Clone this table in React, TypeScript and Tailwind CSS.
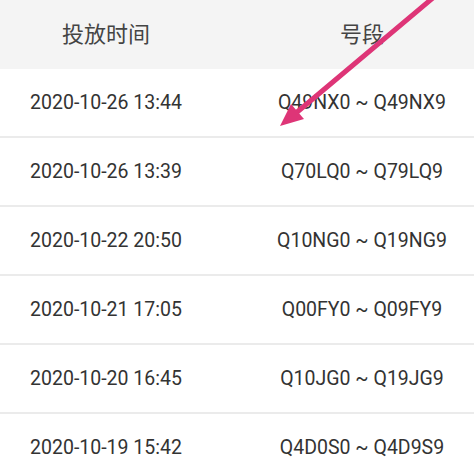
const rows = [
  { time: "2020-10-26 13:44", range: "Q49NX0 ~ Q49NX9" },
  { time: "2020-10-26 13:39", range: "Q70LQ0 ~ Q79LQ9" },
  { time: "2020-10-22 20:50", range: "Q10NG0 ~ Q19NG9" },
  { time: "2020-10-21 17:05", range: "Q00FY0 ~ Q09FY9" },
  { time: "2020-10-20 16:45", range: "Q10JG0 ~ Q19JG9" },
  { time: "2020-10-19 15:42", range: "Q4D0S0 ~ Q4D9S9" },
];

export default function App() {
  return (
    <div
      className="relative w-[474px] h-[467px] overflow-hidden bg-white text-[#333]"
      style={{ fontFamily: 'Roboto, "Noto Sans CJK SC", sans-serif' }}
    >
      {/* header */}
      <div className="flex h-[69px] items-center bg-[#f4f4f4] text-[22px] text-[#444]">
        <div className="w-[212px] text-center">投放时间</div>
        <div className="flex-1 pl-[38px] text-center">号段</div>
      </div>

      {rows.map((row) => (
        <div key={row.time} className="flex h-[69px] flex-col">
          <div className="flex flex-1 items-center text-[19.5px]">
            <div className="w-[212px] text-center">{row.time}</div>
            <div className="flex-1 pl-[38px] text-center">{row.range}</div>
          </div>
          <div className="h-[2px] bg-[#ebebeb]" />
        </div>
      ))}

      {/* annotation arrow */}
      <svg
        className="absolute left-0 top-0 pointer-events-none"
        width="474"
        height="467"
        viewBox="0 0 474 467"
      >
        <line
          x1="434"
          y1="-3"
          x2="296"
          y2="113"
          stroke="#de3577"
          strokeWidth="5"
          strokeLinecap="round"
        />
        <polygon points="280,126 291,104 304,119" fill="#de3577" />
      </svg>
    </div>
  );
}
